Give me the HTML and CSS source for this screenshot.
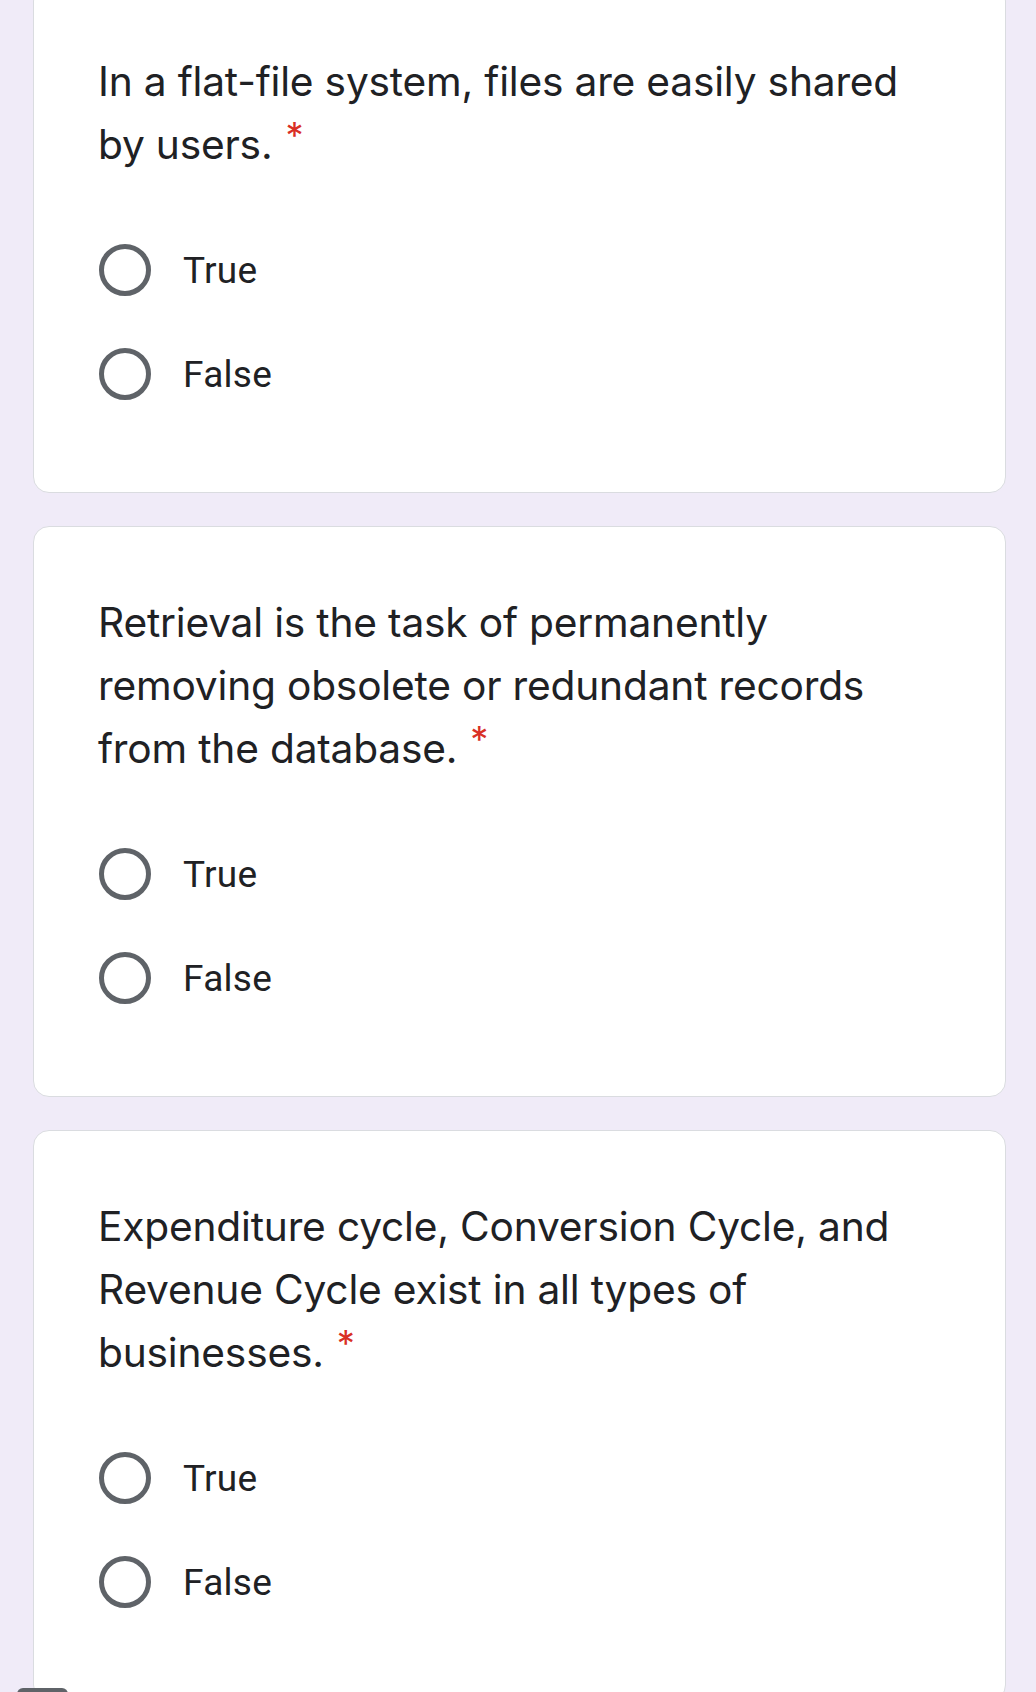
FILE: index.html
```html
<!DOCTYPE html>
<html lang="en">
<head>
<meta charset="utf-8">
<title>Form</title>
<link rel="stylesheet" href="styles.css">
</head>
<body>
<main class="form">
  <section class="card card-first">
    <div class="question">In a flat-file system, files are easily shared by users.<span class="req">*</span></div>
    <div class="options">
      <div class="option"><span class="radio"></span><span class="label">True</span></div>
      <div class="option"><span class="radio"></span><span class="label">False</span></div>
    </div>
  </section>
  <section class="card">
    <div class="question">Retrieval is the task of permanently removing obsolete or redundant records from the database.<span class="req">*</span></div>
    <div class="options">
      <div class="option"><span class="radio"></span><span class="label">True</span></div>
      <div class="option"><span class="radio"></span><span class="label">False</span></div>
    </div>
  </section>
  <section class="card">
    <div class="question">Expenditure cycle, Conversion Cycle, and Revenue Cycle exist in all types of businesses.<span class="req">*</span></div>
    <div class="options">
      <div class="option"><span class="radio"></span><span class="label">True</span></div>
      <div class="option"><span class="radio"></span><span class="label">False</span></div>
    </div>
  </section>
</main>
<div class="corner-tab"></div>
</body>
</html>
```
FILE: styles.css
```css
html, body {
  margin: 0;
  padding: 0;
}
body {
  background: #f0ebf8;
  font-family: Roboto, "Liberation Sans", sans-serif;
  color: #202124;
  overflow: hidden;
  height: 1692px;
}
.form {
  display: flex;
  flex-direction: column;
  gap: 33px;
  padding-left: 33px;
  width: 973px;
}
.card {
  box-sizing: border-box;
  width: 973px;
  background: #ffffff;
  border: 1px solid #dadce0;
  border-radius: 16px;
  padding: 64px 64px 66px 64px;
}
.card-first {
  margin-top: -15px;
}
.question {
  font-family: Inter, "Open Sans", Roboto, sans-serif;
  font-size: 40.7px;
  line-height: 63px;
  color: #202124;
  padding-right: 40px;
  font-variant-ligatures: none;
  letter-spacing: -0.2px;
}
.req {
  color: #d93025;
  margin-left: 13px;
  font-size: 36px;
  line-height: 1;
  vertical-align: 0.3em;
}
.options {
  display: flex;
  flex-direction: column;
  margin-top: 42px;
}
.option {
  display: flex;
  align-items: center;
  height: 104px;
  padding-left: 1px;
}
.radio {
  box-sizing: border-box;
  width: 52px;
  height: 52px;
  border: 5px solid #5f6368;
  border-radius: 50%;
  flex: none;
}
.label {
  font-size: 37px;
  margin-left: 32px;
  color: #202124;
  letter-spacing: 0.3px;
}
.corner-tab {
  position: fixed;
  left: 17px;
  bottom: -8px;
  width: 51px;
  height: 12px;
  border-radius: 6px 6px 0 0;
  background: #5f6368;
}
```
